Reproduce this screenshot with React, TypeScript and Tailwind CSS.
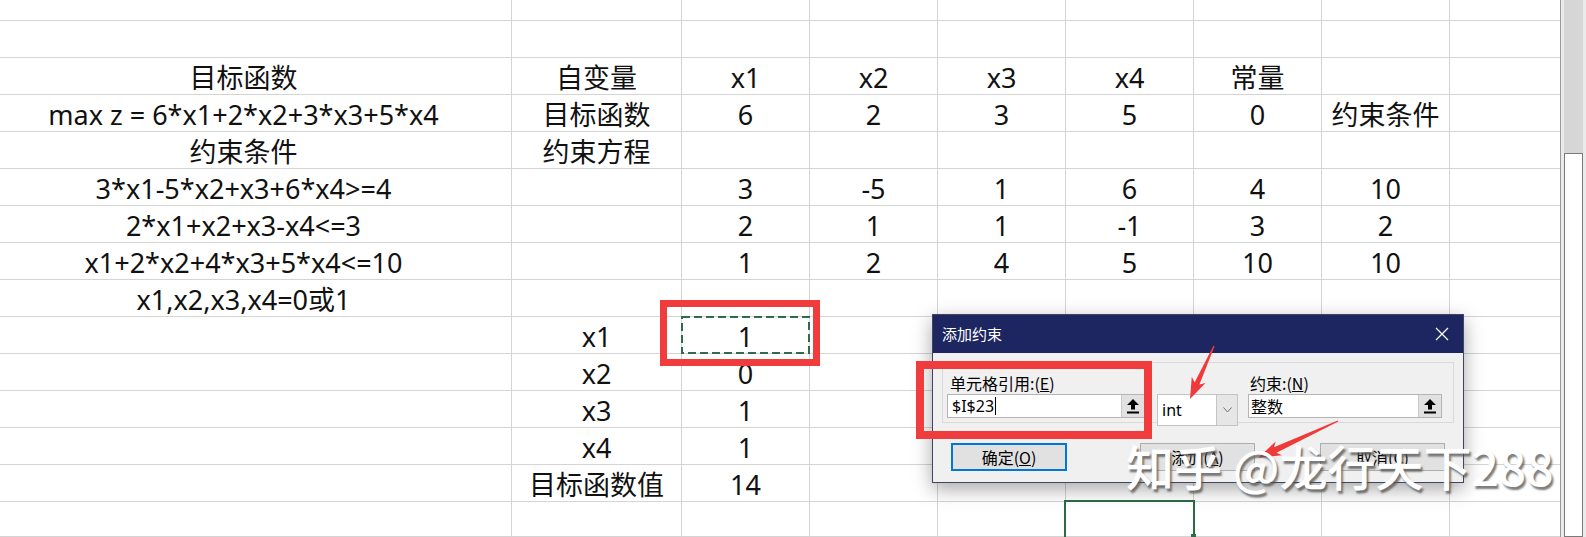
import React from 'react';

const rows: string[][] = [
  [],
  [],
  ['目标函数', '自变量', 'x1', 'x2', 'x3', 'x4', '常量', '', ''],
  ['max z = 6*x1+2*x2+3*x3+5*x4', '目标函数', '6', '2', '3', '5', '0', '约束条件', ''],
  ['约束条件', '约束方程'],
  ['3*x1-5*x2+x3+6*x4>=4', '', '3', '-5', '1', '6', '4', '10'],
  ['2*x1+x2+x3-x4<=3', '', '2', '1', '1', '-1', '3', '2'],
  ['x1+2*x2+4*x3+5*x4<=10', '', '1', '2', '4', '5', '10', '10'],
  ['x1,x2,x3,x4=0或1'],
  ['', 'x1', '1'],
  ['', 'x2', '0'],
  ['', 'x3', '1'],
  ['', 'x4', '1'],
  ['', '目标函数值', '14'],
  [],
];

const COLS = 9;

// tapered red arrow as drawn by screenshot tools, tail -> tip
function arrow(x1: number, y1: number, x2: number, y2: number, head = 17, hw = 7.5, sw = 2.6) {
  const dx = x2 - x1;
  const dy = y2 - y1;
  const len = Math.hypot(dx, dy);
  const c = dx / len;
  const s = dy / len;
  const pts = [
    [0, -0.7],
    [len - head, -sw],
    [len - head - 4, -hw],
    [len, 0],
    [len - head - 4, hw],
    [len - head, sw],
    [0, 0.7],
  ];
  return pts.map(([u, v]) => `${(x1 + u * c - v * s).toFixed(1)},${(y1 + u * s + v * c).toFixed(1)}`).join(' ');
}

function RefButton() {
  return (
    <div className="flex w-[23px] items-center justify-center border-l border-[#c9c9c9] bg-[#e1e1e1]">
      <svg width="12" height="15" viewBox="0 0 12 15">
        <polygon points="6,0 12,6 8,6 8,10.5 4,10.5 4,6 0,6" fill="#000" />
        <rect x="0" y="12.5" width="12" height="2" fill="#000" />
      </svg>
    </div>
  );
}

function Dialog() {
  return (
    <div className="absolute left-[932px] top-[314px] flex h-[169px] w-[532px] flex-col border border-[#404560] bg-[#f0f0f0] shadow-[0_6px_18px_rgba(0,0,0,0.35)] font-['Noto_Sans_CJK_SC','Noto_Sans',sans-serif] text-black">
      <div className="flex h-[38px] items-center justify-between bg-[#1d2660] pl-[9px] pr-[14px] text-[15px] text-white">
        <span>添加约束</span>
        <svg width="14" height="14" viewBox="0 0 14 14">
          <path d="M1 1 L13 13 M13 1 L1 13" stroke="#fff" strokeWidth="1.3" />
        </svg>
      </div>

      <div className="flex flex-1 flex-col px-[9px]">
        <div className="mt-[9px] flex h-[61px] border border-[#d9d9d9] pl-[4px] pt-[10px] text-[16px]">
          <div className="flex w-[198px] flex-col">
            <div className="h-[21px] pl-[3px] leading-[20px]">
              单元格引用:(<span className="underline">E</span>)
            </div>
            <div className="flex h-[24px] border border-[#b4b4b4] bg-white">
              <div className="flex flex-1 items-center pl-[4px] font-['Noto_Sans',sans-serif] text-[16px]">
                $I$23<span className="ml-[1px] h-[18px] w-[1px] bg-black" />
              </div>
              <RefButton />
            </div>
          </div>

          <div className="ml-[12px] w-[81px] pt-[21px]">
            <div className="flex h-[32px] border border-[#c4c4c4] bg-white">
              <div className="flex flex-1 items-center pl-[4px] font-['Noto_Sans',sans-serif] text-[16px]">int</div>
              <div className="flex w-[21px] items-center justify-center border-l border-[#c4c4c4] bg-[#e6e6e6]">
                <svg width="9" height="6" viewBox="0 0 9 6">
                  <path d="M0.5 0.5 L4.5 5 L8.5 0.5" fill="none" stroke="#707070" strokeWidth="1" />
                </svg>
              </div>
            </div>
          </div>

          <div className="ml-[10px] flex w-[194px] flex-col">
            <div className="h-[21px] pl-[2px] leading-[20px]">
              约束:(<span className="underline">N</span>)
            </div>
            <div className="flex h-[24px] border border-[#b4b4b4] bg-white">
              <div className="flex flex-1 items-center pl-[2px] text-[16px]">整数</div>
              <RefButton />
            </div>
          </div>
        </div>

        <div className="mt-[20px] flex text-[16px]">
          <div className="ml-[9px] flex h-[28px] w-[116px] items-center justify-center border-2 border-[#0078d7] bg-[#e1e1e1]">
            确定(<span className="underline">O</span>)
          </div>
          <div className="ml-[73px] flex h-[28px] w-[115px] items-center justify-center border border-[#adadad] bg-[#e1e1e1]">
            添加(<span className="underline">A</span>)
          </div>
          <div className="ml-[65px] flex h-[28px] w-[125px] items-center justify-center border border-[#adadad] bg-[#e1e1e1]">
            取消(<span className="underline">C</span>)
          </div>
        </div>
      </div>
    </div>
  );
}

export default function App() {
  return (
    <div className="relative flex h-[537px] w-[1586px] overflow-hidden bg-white font-['Noto_Sans','Noto_Sans_CJK_SC',sans-serif] text-[#111]">
      {/* sheet */}
      <div className="grid w-[1560px] grid-cols-[512px_170px_128px_128px_128px_128px_128px_128px_110px] grid-rows-[21px_repeat(13,37px)_35px]">
        {rows.map((row, r) =>
          Array.from({ length: COLS }).map((_, c) => (
            <div
              key={`${r}-${c}`}
              className={`flex items-center justify-center whitespace-nowrap border-b border-[#d4d4d4] pt-[2px] text-[27px] leading-none ${
                c < COLS - 1 ? 'border-r' : ''
              } ${c === 0 ? 'pr-6' : ''}`}
            >
              {row[c] ?? ''}
            </div>
          ))
        )}
      </div>

      {/* vertical scrollbar */}
      <div className="flex w-[26px] flex-col border-l border-[#9a9a9a] bg-[#ebebeb] pl-[3px] pr-[3px]">
        <div className="h-[153px] bg-[#d6d6d6]" />
        <div className="flex-1 border border-[#7a7a7a] bg-white" />
      </div>

      {/* copy marquee on the x1 value */}
      <svg className="absolute left-[681px] top-[316px]" width="129" height="38" viewBox="0 0 129 38">
        <rect x="1" y="1" width="127" height="36" fill="none" stroke="#2f6b4f" strokeWidth="2" strokeDasharray="8 4" />
      </svg>

      {/* active cell */}
      <div className="absolute left-[1064px] top-[500px] h-[40px] w-[131px] border-2 border-[#2a6b48]" />
      <div className="absolute left-[1191px] top-[534px] h-[5px] w-[5px] bg-[#2a6b48]" />

      <Dialog />

      {/* annotations */}
      <div className="absolute left-[660px] top-[300px] h-[66px] w-[160px] border-[7px] border-[#f03c3c]" />
      <div className="absolute left-[916px] top-[361px] h-[78px] w-[236px] border-[8px] border-[#f03c3c]" />
      <svg className="pointer-events-none absolute left-0 top-0" width="1586" height="537" viewBox="0 0 1586 537">
        <polygon points={arrow(1214, 346, 1190, 399)} fill="#f03a3a" />
        <polygon points={arrow(1338, 421, 1258, 458, 19, 7.5, 3)} fill="#f03a3a" />
      </svg>

      {/* watermark */}
      <div className="pointer-events-none absolute left-[1126px] top-[441px] whitespace-nowrap font-['Noto_Sans_CJK_SC',sans-serif] text-[48px] font-medium leading-none text-white [text-shadow:2px_3px_2px_rgba(80,80,80,0.75)]">
        知乎 @龙行天下288
      </div>
    </div>
  );
}
